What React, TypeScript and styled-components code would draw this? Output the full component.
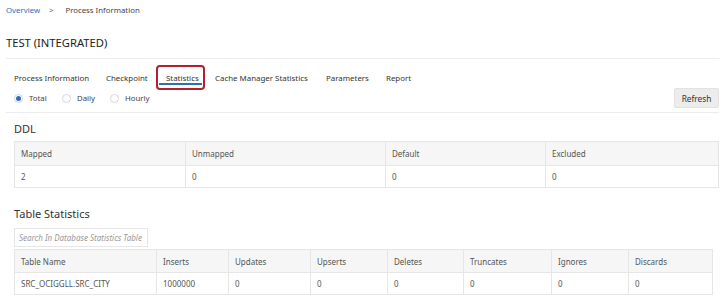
import React from "react";
import styled, { createGlobalStyle } from "styled-components";

const Global = createGlobalStyle`
  html, body { margin: 0; padding: 0; background: #fff; }
  body { font-family: "Noto Sans", "Open Sans", sans-serif; color: #333; }
  * { box-sizing: border-box; }
`;

const Page = styled.div`
  width: 725px;
  height: 306px;
  padding: 0 6px 0 6px;
  display: flex;
  flex-direction: column;
  overflow: hidden;
`;

const Breadcrumb = styled.div`
  display: flex;
  align-items: center;
  height: 20px;
  font-size: 7.8px;
  color: #444;
`;

const Crumb = styled.span<{ $link?: boolean }>`
  color: ${(p) => (p.$link ? "#2a6ebb" : "#444")};
`;

const CrumbSep = styled.span`
  color: #666;
  margin: 0 12px 0 9px;
`;

const Title = styled.h1`
  margin: 13px 0 0 0;
  font-size: 11.2px;
  font-weight: 400;
  color: #222;
  height: 20px;
  line-height: 20px;
`;

const Divider = styled.div`
  height: 1px;
  background: #ececec;
  margin-top: 5px;
`;

const Body = styled.div`
  padding: 0 0 0 8px;
  display: flex;
  flex-direction: column;
`;

const Tabs = styled.div`
  display: flex;
  align-items: center;
  height: 26px;
  margin-top: 6px;
`;

const Tab = styled.div<{ $w: number }>`
  position: relative;
  width: ${(p) => p.$w}px;
  font-size: 7.9px;
  color: #333;
  display: flex;
  align-items: center;
  height: 26px;
`;

const ActiveBox = styled.div`
  position: absolute;
  left: -10px;
  top: 0;
  width: 49px;
  height: 25px;
  border: 2px solid #b5202e;
  border-radius: 4px;
  &::after {
    content: "";
    position: absolute;
    left: 1px;
    right: 1px;
    bottom: 3px;
    height: 2px;
    background: #2f6db5;
  }
`;

const Controls = styled.div`
  display: flex;
  align-items: center;
  justify-content: space-between;
  height: 20px;
  margin-top: -3px;
`;

const Radios = styled.div`
  display: flex;
  align-items: center;
  font-size: 7.8px;
  color: #444;
`;

const RadioItem = styled.label<{ $w: number }>`
  display: flex;
  align-items: center;
  gap: 6px;
  width: ${(p) => p.$w}px;
`;

const RadioDot = styled.span<{ $on?: boolean }>`
  width: 9px;
  height: 9px;
  border-radius: 50%;
  border: 1px solid ${(p) => (p.$on ? "#c9d7ea" : "#d6d6d6")};
  display: inline-flex;
  align-items: center;
  justify-content: center;
  &::after {
    content: "";
    width: 5px;
    height: 5px;
    border-radius: 50%;
    background: ${(p) => (p.$on ? "#2f6db5" : "transparent")};
  }
`;

const Button = styled.button`
  width: 45px;
  height: 20px;
  background: #ececec;
  border: 1px solid #e2e2e2;
  border-radius: 2px;
  font-family: inherit;
  font-size: 8.3px;
  color: #333;
  padding: 0;
`;

const Divider2 = styled.div`
  height: 1px;
  background: #ececec;
  margin: 4px 0 0 -8px;
`;

const SectionTitle = styled.h2<{ $mt: number }>`
  margin: ${(p) => p.$mt}px 0 0 0;
  font-size: 11px;
  font-weight: 400;
  color: #333;
  height: 18px;
  line-height: 18px;
`;

const Table = styled.div<{ $cols: string; $w: number; $mt: number }>`
  display: grid;
  grid-template-columns: ${(p) => p.$cols};
  width: ${(p) => p.$w}px;
  border: 1px solid #e6e6e6;
  margin-top: ${(p) => p.$mt}px;
`;

const Cell = styled.div<{ $head?: boolean; $last?: boolean; $h: number }>`
  height: ${(p) => p.$h}px;
  display: flex;
  align-items: center;
  padding-left: 6px;
  font-size: 8px;
  color: #555;
  background: ${(p) => (p.$head ? "#f6f6f6" : "#fff")};
  border-right: ${(p) => (p.$last ? "none" : "1px solid #e6e6e6")};
  border-bottom: ${(p) => (p.$head ? "1px solid #e6e6e6" : "none")};
`;

const Search = styled.input`
  width: 134px;
  height: 19px;
  margin-top: 5px;
  border: 1px solid #e6e6e6;
  font-family: inherit;
  font-size: 8px;
  font-style: italic;
  padding: 0 4px;
  &::placeholder { color: #999; }
`;

const ddlHead = ["Mapped", "Unmapped", "Default", "Excluded"];
const ddlRow = ["2", "0", "0", "0"];
const statHead = ["Table Name", "Inserts", "Updates", "Upserts", "Deletes", "Truncates", "Ignores", "Discards"];
const statRow = ["SRC_OCIGGLL.SRC_CITY", "1000000", "0", "0", "0", "0", "0", "0"];

export default function App() {
  return (
    <>
      <Global />
      <Page>
        <Breadcrumb>
          <Crumb $link>Overview</Crumb>
          <CrumbSep>&gt;</CrumbSep>
          <Crumb>Process Information</Crumb>
        </Breadcrumb>
        <Title>TEST (INTEGRATED)</Title>
        <Divider />
        <Body>
          <Tabs>
            <Tab $w={92}>Process Information</Tab>
            <Tab $w={60}>Checkpoint</Tab>
            <Tab $w={49}>
              <ActiveBox />
              Statistics
            </Tab>
            <Tab $w={111}>Cache Manager Statistics</Tab>
            <Tab $w={60}>Parameters</Tab>
            <Tab $w={40}>Report</Tab>
          </Tabs>
          <Controls>
            <Radios>
              <RadioItem $w={48}>
                <RadioDot $on />
                Total
              </RadioItem>
              <RadioItem $w={48}>
                <RadioDot />
                Daily
              </RadioItem>
              <RadioItem $w={50}>
                <RadioDot />
                Hourly
              </RadioItem>
            </Radios>
            <Button>Refresh</Button>
          </Controls>
          <Divider2 />
          <SectionTitle $mt={7}>DDL</SectionTitle>
          <Table $cols="171px 200px 160px 1fr" $w={705} $mt={3}>
            {ddlHead.map((h, i) => (
              <Cell key={h} $head $h={24} $last={i === ddlHead.length - 1}>{h}</Cell>
            ))}
            {ddlRow.map((v, i) => (
              <Cell key={i} $h={21} $last={i === ddlRow.length - 1}>{v}</Cell>
            ))}
          </Table>
          <SectionTitle $mt={17}>Table Statistics</SectionTitle>
          <Search placeholder="Search In Database Statistics Table" />
          <Table $cols="142px 72px 82px 77px 76px 88px 77px 1fr" $w={699} $mt={2}>
            {statHead.map((h, i) => (
              <Cell key={h} $head $h={23} $last={i === statHead.length - 1}>{h}</Cell>
            ))}
            {statRow.map((v, i) => (
              <Cell key={i} $h={21} $last={i === statRow.length - 1}>{v}</Cell>
            ))}
          </Table>
        </Body>
      </Page>
    </>
  );
}
